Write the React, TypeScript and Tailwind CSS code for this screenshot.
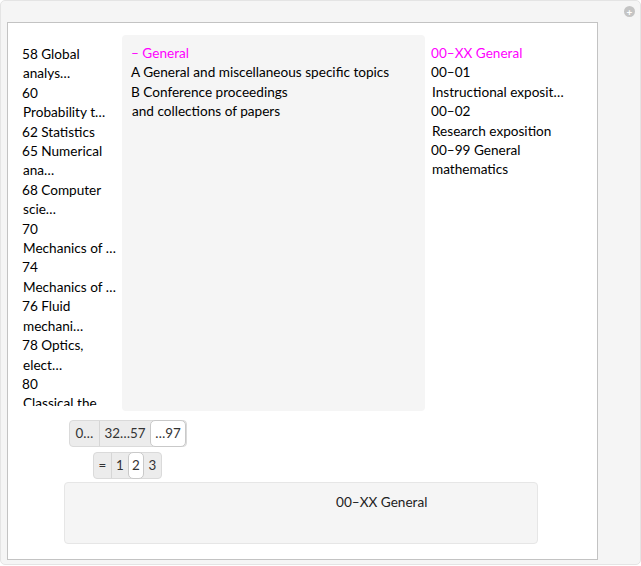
import React from 'react';

const leftItems: string[][] = [
  ['58 Global', 'analys…'],
  ['60', 'Probability t…'],
  ['62 Statistics'],
  ['65 Numerical', 'ana…'],
  ['68 Computer', 'scie…'],
  ['70', 'Mechanics of …'],
  ['74', 'Mechanics of …'],
  ['76 Fluid', 'mechani…'],
  ['78 Optics,', 'elect…'],
  ['80', 'Classical the'],
];

const rightItems: string[][] = [
  ['00–01', 'Instructional exposit…'],
  ['00–02', 'Research exposition'],
  ['00–99 General', 'mathematics'],
];

type Seg = { label: string; w: string };

function Segmented({ items, active }: { items: Seg[]; active: number }) {
  return (
    <div className="flex h-[27px] rounded-[4px] border border-[#dadada] bg-[#ececec] text-[13.4px] text-[#333]">
      {items.map((it, i) => (
        <div
          key={it.label}
          className={`flex items-center justify-center ${it.w} ${
            i === active
              ? 'rounded-[5px] border border-[#c9c9c9] bg-white -my-px'
              : i > 0 && i !== active + 1
              ? 'border-l border-[#d6d6d6]'
              : ''
          }`}
        >
          {it.label}
        </div>
      ))}
    </div>
  );
}

export default function App() {
  return (
    <div
      className="h-[566px] w-[641px] bg-white"
      style={{ fontFamily: 'Lato, "Noto Sans", sans-serif' }}
    >
      <div className="relative h-[565px] w-[641px] rounded-[5px] border border-[#e4e4e4] bg-[#f5f5f5] pl-[6px] pt-[21px]">
        <div className="absolute right-[5px] top-[5px] flex h-[11px] w-[11px] items-center justify-center rounded-full bg-[#c4c4c4] text-[10px] font-bold leading-none text-white">
          +
        </div>
        <div className="h-[538px] w-[591px] border border-[#c3c3c3] bg-white">
          <div className="flex whitespace-nowrap pt-[12px] text-[13.6px] leading-[19.4px] text-black">
            <div className="h-[371px] w-[114px] shrink-0 overflow-hidden pl-[14px] pt-[10px]">
              {leftItems.map((it) => (
                <div key={it[0]}>
                  <div>{it[0]}</div>
                  {it[1] && <div className="pl-px">{it[1]}</div>}
                </div>
              ))}
            </div>
            <div className="h-[376px] w-[303px] shrink-0 rounded-[4px] bg-[#f5f5f5] pl-[9px] pt-[9px]">
              <div className="text-[#ff00ff]">– General</div>
              <div>A General and miscellaneous specific topics</div>
              <div>B Conference proceedings</div>
              <div className="pl-px">and collections of papers</div>
            </div>
            <div className="shrink-0 pl-[6px] pt-[9px]">
              <div className="text-[#ff00ff]">00–XX General</div>
              {rightItems.map((it) => (
                <div key={it[0]}>
                  <div>{it[0]}</div>
                  <div className="pl-px">{it[1]}</div>
                </div>
              ))}
            </div>
          </div>
          <div className="mt-[9px] flex pl-[61px]">
            <Segmented
              items={[
                { label: '0…', w: 'w-[29px]' },
                { label: '32…57', w: 'w-[51px]' },
                { label: '…97', w: 'w-[36px]' },
              ]}
              active={2}
            />
          </div>
          <div className="mt-[5px] flex pl-[85px]">
            <Segmented
              items={[
                { label: '=', w: 'w-[17px]' },
                { label: '1', w: 'w-[17px]' },
                { label: '2', w: 'w-[16px]' },
                { label: '3', w: 'w-[17px]' },
              ]}
              active={2}
            />
          </div>
          <div className="ml-[56px] mt-[3px] h-[62px] w-[474px] rounded-[4px] border border-[#e6e6e6] bg-[#f5f5f5] pl-[271px] pt-[9px] text-[13.6px] text-[#222]">
            00–XX General
          </div>
        </div>
      </div>
    </div>
  );
}
